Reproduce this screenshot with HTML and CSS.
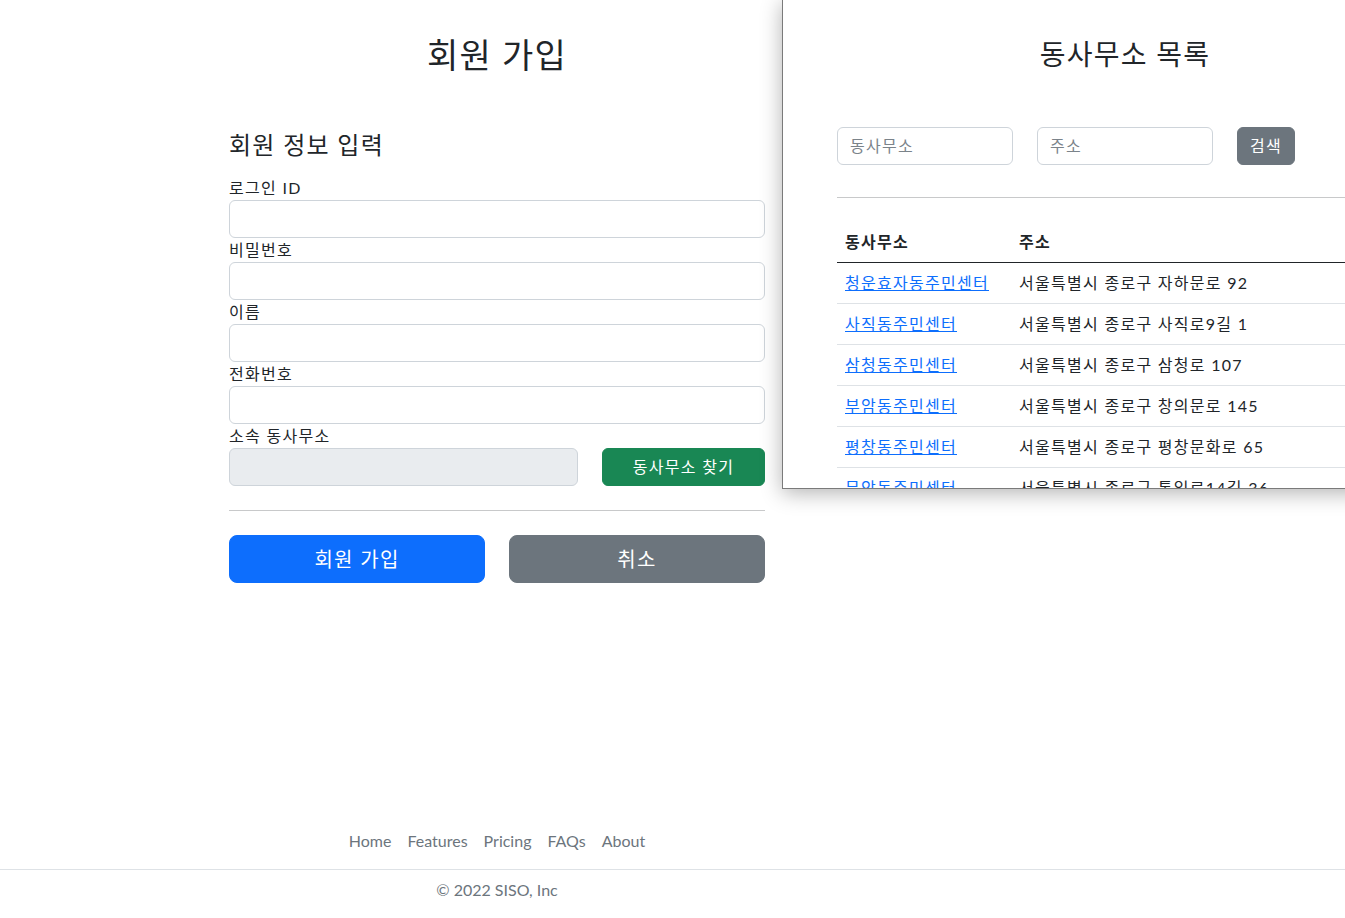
FILE: index.html
```html
<!DOCTYPE html>
<html lang="ko">
<head>
    <meta charset="UTF-8">
    <meta name="viewport" content="width=device-width, initial-scale=1.0">
    <title>회원 가입</title>
    <link rel="stylesheet" href="styles.css">
</head>
<body>
    <div class="page">
        <main class="container">
            <div class="page-title">
                <h2>회원 가입</h2>
            </div>
            <h4>회원 정보 입력</h4>
            <form class="join-form">
                <div class="field">
                    <label for="loginId">로그인 ID</label>
                    <input type="text" id="loginId" class="form-control">
                </div>
                <div class="field">
                    <label for="password">비밀번호</label>
                    <input type="password" id="password" class="form-control">
                </div>
                <div class="field">
                    <label for="name">이름</label>
                    <input type="text" id="name" class="form-control">
                </div>
                <div class="field">
                    <label for="phone">전화번호</label>
                    <input type="text" id="phone" class="form-control">
                </div>
                <div class="field">
                    <label for="office">소속 동사무소</label>
                    <div class="office-row">
                        <input type="text" id="office" class="form-control" readonly>
                        <button type="button" class="btn btn-success">동사무소 찾기</button>
                    </div>
                </div>
                <hr class="divider">
                <div class="button-row">
                    <button type="submit" class="btn btn-lg btn-primary">회원 가입</button>
                    <button type="button" class="btn btn-lg btn-secondary">취소</button>
                </div>
            </form>
        </main>

        <footer class="footer">
            <div class="footer-nav">
                <ul class="nav">
                    <li><a href="#" class="nav-link">Home</a></li>
                    <li><a href="#" class="nav-link">Features</a></li>
                    <li><a href="#" class="nav-link">Pricing</a></li>
                    <li><a href="#" class="nav-link">FAQs</a></li>
                    <li><a href="#" class="nav-link">About</a></li>
                </ul>
            </div>
            <p class="copyright">© 2022 SISO, Inc</p>
        </footer>
    </div>

    <!-- 동사무소 찾기 팝업 창 -->
    <div class="popup">
        <div class="popup-body">
            <h3 class="popup-title">동사무소 목록</h3>
            <form class="search-form">
                <input type="text" class="form-control" placeholder="동사무소">
                <input type="text" class="form-control" placeholder="주소">
                <button type="button" class="btn btn-secondary">검색</button>
            </form>
            <hr class="search-divider">
            <table class="table">
                <thead>
                    <tr>
                        <th class="col-name">동사무소</th>
                        <th>주소</th>
                    </tr>
                </thead>
                <tbody>
                    <tr><td><a href="#">청운효자동주민센터</a></td><td>서울특별시 종로구 자하문로 92</td></tr>
                    <tr><td><a href="#">사직동주민센터</a></td><td>서울특별시 종로구 사직로9길 1</td></tr>
                    <tr><td><a href="#">삼청동주민센터</a></td><td>서울특별시 종로구 삼청로 107</td></tr>
                    <tr><td><a href="#">부암동주민센터</a></td><td>서울특별시 종로구 창의문로 145</td></tr>
                    <tr><td><a href="#">평창동주민센터</a></td><td>서울특별시 종로구 평창문화로 65</td></tr>
                    <tr><td><a href="#">무악동주민센터</a></td><td>서울특별시 종로구 통일로14길 36</td></tr>
                </tbody>
            </table>
        </div>
    </div>
</body>
</html>
```

FILE: styles.css
```css
html, body {
    margin: 0;
    padding: 0;
    overflow: hidden;
}
body {
    font-family: "Segoe UI", Lato, "Noto Sans CJK KR", sans-serif;
    font-size: 16px;
    line-height: 1.5;
    color: #212529;
    background: #fff;
    height: 918px;
    position: relative;
}
* {
    box-sizing: border-box;
}
.container,
.popup {
    letter-spacing: 0.08em;
}
.container {
    width: 994px;
}
.container > * {
    margin-left: 229px;
    width: 536px;
}
.page-title {
    padding: 35px 0 55px;
    text-align: center;
}
.page-title h2 {
    margin: 0;
    font-size: 34px;
    font-weight: 400;
    line-height: 1.2;
}
h4 {
    margin: 0 0 16px;
    font-size: 24px;
    font-weight: 400;
    line-height: 1.2;
}
.field label {
    display: block;
    line-height: 24px;
}
.form-control {
    display: block;
    width: 100%;
    height: 38px;
    padding: 6px 12px;
    font: inherit;
    letter-spacing: inherit;
    color: #212529;
    background: #fff;
    border: 1px solid #ced4da;
    border-radius: 6px;
}
.form-control::placeholder {
    color: #7b838a;
}
.form-control[readonly] {
    background: #e9ecef;
}
.office-row {
    display: grid;
    grid-template-columns: 349px 163px;
    column-gap: 24px;
}
.btn {
    display: inline-block;
    height: 38px;
    padding: 6px 12px;
    font: inherit;
    letter-spacing: inherit;
    color: #fff;
    border: 1px solid transparent;
    border-radius: 6px;
    cursor: pointer;
    text-align: center;
}
.btn-success {
    background: #198754;
    border-color: #198754;
}
.btn-primary {
    background: #0d6efd;
    border-color: #0d6efd;
}
.btn-secondary {
    background: #6c757d;
    border-color: #6c757d;
}
.btn-lg {
    height: 48px;
    font-size: 20px;
    border-radius: 8px;
}
.divider {
    margin: 24px 0;
    border: 0;
    border-top: 1px solid #c8c9ca;
}
.button-row {
    display: grid;
    grid-template-columns: 1fr 1fr;
    column-gap: 24px;
}
.footer {
    margin-top: 238px;
}
.footer-nav {
    border-bottom: 1px solid #dee2e6;
    padding-bottom: 8px;
}
.nav {
    width: 994px;
    margin: 0;
    padding: 0;
    list-style: none;
    display: flex;
    justify-content: center;
}
.nav-link {
    display: block;
    padding: 8px 8px;
    color: #6c757d;
    text-decoration: none;
}
.copyright {
    width: 994px;
    margin: 8px 0 0;
    text-align: center;
    color: #6c757d;
}

/* popup window */
.popup {
    position: absolute;
    left: 782px;
    top: -1px;
    width: 686px;
    height: 490px;
    background: #fff;
    border: 1px solid #7a7a7a;
    box-shadow: 0 4px 20px rgba(0, 0, 0, 0.3);
    overflow: hidden;
}
.popup-body {
    padding: 38px 54px 0;
}
.popup-title {
    margin: 0 0 55px;
    font-size: 28px;
    font-weight: 400;
    line-height: 1.2;
    text-align: center;
}
.search-form {
    display: flex;
    gap: 24px;
}
.search-form .form-control {
    width: 176px;
}
.search-form .btn {
    width: 58px;
    padding: 6px 0;
}
.search-divider {
    margin: 32px 0 24px;
    border: 0;
    border-top: 1px solid #c8c9ca;
}
.table {
    width: 100%;
    border-collapse: collapse;
}
.table th,
.table td {
    padding: 8px;
    text-align: left;
    border-bottom: 1px solid #dee2e6;
    white-space: nowrap;
}
.table th {
    font-weight: 700;
    border-bottom: 1px solid #212529;
}
.table .col-name {
    width: 174px;
}
.table a {
    color: #0d6efd;
}
```
